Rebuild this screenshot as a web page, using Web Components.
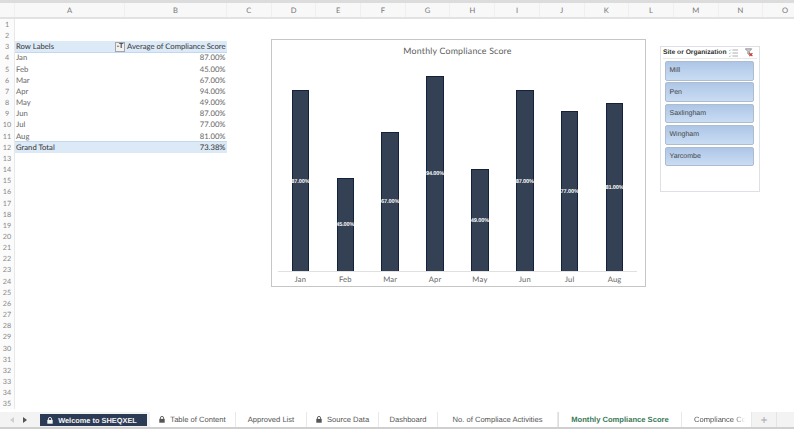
<!DOCTYPE html>
<html>
<head>
<meta charset="utf-8">
<title>Monthly Compliance Score</title>
<style>
  html, body { margin: 0; height: 100%; background: #fff; }
  body { overflow: hidden; text-rendering: geometricPrecision; }
</style>
</head>
<body>
<xl-workbook>
  <xl-sheet>
    <xl-chart title="Monthly Compliance Score"></xl-chart>
    <xl-slicer title="Site or Organization">
      <xl-slicer-item>Mill</xl-slicer-item>
      <xl-slicer-item>Pen</xl-slicer-item>
      <xl-slicer-item>Saxlingham</xl-slicer-item>
      <xl-slicer-item>Wingham</xl-slicer-item>
      <xl-slicer-item>Yarcombe</xl-slicer-item>
    </xl-slicer>
  </xl-sheet>
  <xl-tabs></xl-tabs>
</xl-workbook>

<script>
const LOCK = `<svg width="6" height="7" viewBox="0 0 6 7"><path d="M1.4 3V2a1.6 1.6 0 0 1 3.2 0v1" fill="none" stroke="currentColor" stroke-width=".9"/><rect x=".3" y="2.9" width="5.4" height="3.8" fill="currentColor"/></svg>`;

class XlWorkbook extends HTMLElement {
    constructor() {
        super();
        this.attachShadow({mode: "open"}).innerHTML = `
        <style>
            :host { display: flex; flex-direction: column; width: 794px; height: 429px; overflow: hidden; background: #fff; }
            .top { height: 3px; flex: none; background: #dcdcdc; }
        </style>
        <div class="top"></div>
        <slot></slot>`;
    }
}

class XlSheet extends HTMLElement {
    constructor() {
        super();
        this.attachShadow({mode: "open"});
        const columns = "ABCDEFGHIJKLMNO".split("");
        const rows = [
            ["Jan", "87.00%"], ["Feb", "45.00%"], ["Mar", "67.00%"], ["Apr", "94.00%"],
            ["May", "49.00%"], ["Jun", "87.00%"], ["Jul", "77.00%"], ["Aug", "81.00%"]
        ];
        let nums = "";
        for (let i = 1; i <= 35; i++) nums += `<div>${i}</div>`;
        this.shadowRoot.innerHTML = `
        <style>
            :host { display: block; position: relative; flex: 1; overflow: hidden; font: 7.7px "Lato", "Liberation Sans", sans-serif; color: #666; }
            .cols { display: grid; grid-template-columns: 15px 110px 102px repeat(13, 44.7px); height: 14px; background: #f8f8f8; border-bottom: 2px solid #e2e2e2; }
            .cols div { display: flex; align-items: center; justify-content: center; border-right: 1px solid #efefef; color: #777; font-size: 7.6px; }
            .body { display: grid; grid-template-columns: 15px 110px 102px; grid-auto-rows: 11.17px; }
            .nums { grid-row: 1 / span 35; display: grid; grid-auto-rows: 11.17px; background: #fbfbfb; border-right: 1px solid #e8e8e8; box-sizing: border-box; font-size: 7.2px; color: #888; text-align: center; }
            .nums div { line-height: 11.17px; }
            .c { line-height: 11.17px; padding: 0 1.5px 0 1px; white-space: nowrap; }
            .r { text-align: right; }
            .head { background: #dce9f7; color: #333; position: relative; border-bottom: 1px solid #c3d8ee; margin-bottom: -1px; }
            .total { background: #dce9f7; color: #333; border-top: 1px solid #c3d8ee; margin-top: -1px; }
            .filter { position: absolute; left: 100px; top: 1px; width: 10px; height: 9.5px; box-sizing: border-box; border: 1px solid #a5a5a5; background: #f2f2f2; color: #333; font: bold 7px/8px "Liberation Sans", sans-serif; text-align: center; }
        </style>
        <div class="cols"><div></div>${columns.map(c => `<div>${c}</div>`).join("")}</div>
        <div class="body">
            <div class="nums">${nums}</div>
            <div style="grid-column: 2 / span 2; grid-row: span 2"></div>
            <div class="c head">Row Labels<span class="filter">-T</span></div>
            <div class="c head r">Average of Compliance Score</div>
            ${rows.map(r => `<div class="c">${r[0]}</div><div class="c r">${r[1]}</div>`).join("")}
            <div class="c total">Grand Total</div>
            <div class="c total r">73.38%</div>
        </div>
        <slot></slot>`;
    }
}

class XlChart extends HTMLElement {
    constructor() {
        super();
        this.attachShadow({mode: "open"});
        const data = [["Jan", 87], ["Feb", 45], ["Mar", 67], ["Apr", 94], ["May", 49], ["Jun", 87], ["Jul", 77], ["Aug", 81]];
        this.shadowRoot.innerHTML = `
        <style>
            :host { position: absolute; left: 271px; top: 36px; width: 375px; height: 248px; box-sizing: border-box; border: 1px solid #c6c6c6; background: #fff; display: flex; flex-direction: column; padding: 0 8px 0 6px; font-family: "Lato", "Open Sans", sans-serif; color: #666; }
            h2 { margin: 0; height: 22px; flex: none; font: 400 8.8px/21px "Lato", sans-serif; letter-spacing: .2px; text-align: center; color: #5c5c5c; }
            .plot { flex: none; height: 209px; display: grid; grid-template-columns: repeat(8, 1fr); align-items: end; border-bottom: 1px solid #e0e0e0; }
            .slot { display: flex; justify-content: center; }
            .bar { flex: none; width: 17.5px; box-sizing: border-box; height: calc(var(--v) * 2.075px); padding-top: 1px; background: #344154; border: 1px solid #14213a; border-bottom: 0; display: flex; align-items: center; justify-content: center; }
            .bar span { flex: none; color: #fff; font: bold 5.6px "Liberation Sans", sans-serif; letter-spacing: -.1px; white-space: nowrap; }
            .labels { display: grid; grid-template-columns: repeat(8, 1fr); text-align: center; font-size: 7.6px; line-height: 15px; letter-spacing: .2px; }
        </style>
        <h2>${this.getAttribute("title")}</h2>
        <div class="plot">${data.map(d => `<div class="slot"><div class="bar" style="--v:${d[1]}"><span>${d[1]}.00%</span></div></div>`).join("")}</div>
        <div class="labels">${data.map(d => `<div>${d[0]}</div>`).join("")}</div>`;
    }
}

class XlSlicer extends HTMLElement {
    constructor() {
        super();
        this.attachShadow({mode: "open"}).innerHTML = `
        <style>
            :host { position: absolute; left: 660px; top: 43px; width: 100px; height: 146px; box-sizing: border-box; border: 1px solid #dde1e6; background: #fff; display: block; font-family: "Liberation Sans", sans-serif; }
            header { display: flex; align-items: center; height: 11px; margin: 0 2px; border-bottom: 1px solid #e8e8e8; font: bold 6.7px/11px "Liberation Sans", sans-serif; color: #333; white-space: nowrap; }
            header svg { flex: none; }
            .multi { margin-left: 2px; }
            .clear { margin-left: 7px; }
            .items { display: flex; flex-direction: column; gap: 1.8px; padding: 2px 5px 0 4px; }
        </style>
        <header>
            <span>${this.getAttribute("title")}</span>
            <svg class="multi" width="9" height="8" viewBox="0 0 9 8"><path d="M0 1l.8.8L2 .5M0 4l.8.8L2 3.5M0 7l.8.8L2 6.5" fill="none" stroke="#8cc08c" stroke-width=".7"/><path d="M3.5 1h5.5M3.5 4h5.5M3.5 7h5.5" stroke="#a5a5a5" stroke-width=".9"/></svg>
            <svg class="clear" width="8" height="9" viewBox="0 0 8 9"><path d="M.3.8h6.4L4.4 3.5v3.3L2.8 5.8V3.5z" fill="#cfcfcf" stroke="#777" stroke-width=".7"/><path d="M4.4 5.2l3 3M7.4 5.2l-3 3" stroke="#c8362c" stroke-width="1.2"/></svg>
        </header>
        <div class="items"><slot></slot></div>`;
    }
}

class XlSlicerItem extends HTMLElement {
    constructor() {
        super();
        this.attachShadow({mode: "open"}).innerHTML = `
        <style>
            :host { display: flex; align-items: center; box-sizing: border-box; height: 19.6px; padding-left: 3.5px; border: 1px solid #aebcd0; border-radius: 2px; background: linear-gradient(#aec6e6, #c9dcf3); font: 7px "Liberation Sans", sans-serif; color: #444; }
        </style>
        <slot></slot>`;
    }
}

class XlTabs extends HTMLElement {
    constructor() {
        super();
        this.attachShadow({mode: "open"});
        const tabs = [
            ["Welcome to SHEQXEL", 107, "dark", true],
            ["Table of Content", 86, "", true],
            ["Approved List", 71, "", false],
            ["Source Data", 72, "", true],
            ["Dashboard", 59, "", false],
            ["No. of Compliace Activities", 120, "", false],
            ["Monthly Compliance Score", 124, "active", false],
            ["Compliance Cou", 70, "cut", false]
        ];
        this.shadowRoot.innerHTML = `
        <style>
            :host { flex: none; display: flex; height: 17px; box-sizing: border-box; background: #f3f3f3; border-bottom: 2px solid #cfcfcf; font: 7.6px "Liberation Sans", sans-serif; color: #555; overflow: hidden; }
            .nav { flex: none; width: 40px; display: flex; align-items: center; gap: 9px; padding-left: 10px; box-sizing: border-box; }
            .nav i { width: 0; height: 0; border-style: solid; border-width: 3.5px 0 3.5px 4px; border-color: transparent transparent transparent #555; }
            .nav i.off { border-width: 3.5px 4px 3.5px 0; border-color: transparent #cfcfcf transparent transparent; }
            .tab { flex: none; box-sizing: border-box; display: flex; align-items: center; justify-content: center; gap: 5px; background: #fff; border-right: 1px solid #e8e8e8; white-space: nowrap; overflow: hidden; }
            .dark { background: #2b3a55; color: #f4f4f4; font-weight: bold; margin: 2px 3px 1px 0; border: 0; font-size: 7.4px; padding-right: 3px; }
            .active { color: #3b7a57; font-weight: bold; border-left: 1px solid #ddd; }
            .cut { justify-content: flex-start; padding-left: 12px; }
            .cut span { -webkit-mask-image: linear-gradient(90deg, #000 72%, transparent 92%); mask-image: linear-gradient(90deg, #000 72%, transparent 92%); }
            .plus { flex: none; width: 24px; display: flex; align-items: center; justify-content: center; color: #aaa; font-size: 12px; border-right: 1px solid #e4e4e4; }
        </style>
        <div class="nav"><i class="off"></i><i></i></div>
        ${tabs.map(t => `<div class="tab ${t[2]}" style="width:${t[1]}px">${t[3] ? LOCK : ""}<span>${t[0]}</span></div>`).join("")}
        <div class="plus">+</div>`;
    }
}

customElements.define("xl-workbook", XlWorkbook);
customElements.define("xl-sheet", XlSheet);
customElements.define("xl-chart", XlChart);
customElements.define("xl-slicer", XlSlicer);
customElements.define("xl-slicer-item", XlSlicerItem);
customElements.define("xl-tabs", XlTabs);
</script>
</body>
</html>
